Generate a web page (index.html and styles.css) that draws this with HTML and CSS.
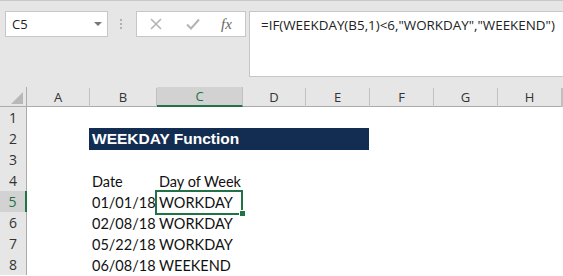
FILE: index.html
```html
<!DOCTYPE html>
<html lang="en">
<head>
    <meta charset="UTF-8">
    <title>WEEKDAY Function</title>
    <link rel="stylesheet" href="styles.css">
</head>
<body>
    <div class="toolbar">
        <div class="name-box">
            <span>C5</span>
            <span class="drop"></span>
        </div>
        <div class="grip">
            <i></i><i></i><i></i>
        </div>
        <div class="buttons">
            <svg class="btn" width="14" height="14" viewBox="0 0 14 14"><path d="M2 2 L12 12 M12 2 L2 12" stroke="#b4b4b4" stroke-width="1.6" fill="none"/></svg>
            <svg class="btn" width="16" height="14" viewBox="0 0 16 14"><path d="M2 7.5 L6 11.5 L14 2.5" stroke="#b4b4b4" stroke-width="2" fill="none"/></svg>
            <span class="fx">fx</span>
        </div>
        <div class="formula">=IF(WEEKDAY(B5,1)&lt;6,"WORKDAY","WEEKEND")</div>
    </div>

    <div class="sheet">
        <div class="row head">
            <div class="corner"><span></span></div>
            <div class="col">A</div>
            <div class="col">B</div>
            <div class="col active">C</div>
            <div class="col">D</div>
            <div class="col">E</div>
            <div class="col">F</div>
            <div class="col">G</div>
            <div class="col">H</div>
            <div class="col"></div>
        </div>
        <div class="row">
            <div class="num">1</div>
        </div>
        <div class="row">
            <div class="num">2</div>
            <div class="cell"></div>
            <div class="title">WEEKDAY Function</div>
        </div>
        <div class="row">
            <div class="num">3</div>
        </div>
        <div class="row">
            <div class="num">4</div>
            <div class="cell"></div>
            <div class="cell">Date</div>
            <div class="cell">Day of Week</div>
        </div>
        <div class="row">
            <div class="num active">5</div>
            <div class="cell"></div>
            <div class="cell right">01/01/18</div>
            <div class="cell selected">WORKDAY</div>
        </div>
        <div class="row">
            <div class="num">6</div>
            <div class="cell"></div>
            <div class="cell right">02/08/18</div>
            <div class="cell">WORKDAY</div>
        </div>
        <div class="row">
            <div class="num">7</div>
            <div class="cell"></div>
            <div class="cell right">05/22/18</div>
            <div class="cell">WORKDAY</div>
        </div>
        <div class="row">
            <div class="num">8</div>
            <div class="cell"></div>
            <div class="cell right">06/08/18</div>
            <div class="cell">WEEKEND</div>
        </div>
    </div>
</body>
</html>
```

FILE: styles.css
```css
body {
    margin: 0;
    background: #fff;
    overflow: hidden;
    font-family: 'Open Sans', sans-serif;
}

.toolbar {
    height: 87px;
    box-sizing: border-box;
    background: #e6e6e6;
    border-top: 1px solid #c8c8c8;
    padding-top: 10px;
    display: flex;
    align-items: flex-start;
}

.name-box {
    width: 103px;
    height: 26px;
    margin-left: 5px;
    box-sizing: border-box;
    background: #fff;
    border: 1px solid #c6c6c6;
    display: flex;
    align-items: center;
    justify-content: space-between;
    padding: 0 5px 0 6px;
    font-size: 13px;
    color: #222;
}

.drop {
    width: 0;
    height: 0;
    border-left: 4px solid transparent;
    border-right: 4px solid transparent;
    border-top: 4px solid #777;
}

.grip {
    width: 3px;
    margin: 8px 13px 0 12px;
    display: flex;
    flex-direction: column;
    gap: 2px;
}

.grip i {
    width: 2px;
    height: 2px;
    background: #b0b0b0;
}

.buttons {
    width: 110px;
    height: 26px;
    box-sizing: border-box;
    background: #fff;
    border: 1px solid #c6c6c6;
    display: flex;
    align-items: center;
    padding-left: 12px;
}

.buttons .btn {
    margin-right: 22px;
}

.fx {
    font-family: 'Liberation Serif', serif;
    font-style: italic;
    font-size: 15px;
    color: #666;
    margin-left: -2px;
}

.formula {
    flex: 1;
    height: 66px;
    margin-left: 3px;
    margin-right: -4px;
    box-sizing: border-box;
    background: #fff;
    border: 1px solid #c6c6c6;
    padding: 4px 0 0 11px;
    font-size: 13.4px;
    color: #222;
    white-space: nowrap;
}

.row {
    display: grid;
    grid-template-columns: 27px 63px 67px 86px 63px 64px 64px 64px 64px 1fr;
    height: 21px;
}

.row.head {
    height: 20px;
    background: #e6e6e6;
    border-bottom: 1px solid #ababab;
    box-sizing: border-box;
}

.corner {
    border-right: 1px solid #ababab;
    position: relative;
}

.corner span {
    position: absolute;
    right: 3px;
    bottom: 3px;
    width: 0;
    height: 0;
    border-left: 12px solid transparent;
    border-bottom: 12px solid #b8b8b8;
}

.col {
    border-right: 1px solid #c0c0c0;
    text-align: center;
    font-size: 13px;
    line-height: 19px;
    color: #333;
    margin-top: 1px;
}

.col.active {
    background: #d2d2d2;
    border-bottom: 2px solid #217346;
    margin-top: 0;
    line-height: 18px;
    color: #217346;
}

.num {
    background: #e6e6e6;
    border-right: 1px solid #ababab;
    border-bottom: 1px solid #c0c0c0;
    text-align: center;
    font-size: 14px;
    line-height: 21px;
    color: #333;
}

.num.active {
    background: #d2d2d2;
    border-right: 2px solid #217346;
    color: #217346;
}

.cell {
    font-family: Lato, 'Liberation Sans', sans-serif;
    font-size: 14.5px;
    line-height: 21px;
    padding: 1px 2px 0;
    color: #111;
    white-space: nowrap;
}

.cell.right {
    text-align: right;
    padding-right: 3px;
}

.title {
    grid-column: 3 / span 4;
    margin-left: -1px;
    margin-right: 1px;
    background: #132d52;
    color: #fff;
    font-family: 'Liberation Sans', sans-serif;
    font-weight: bold;
    font-size: 15.5px;
    line-height: 22px;
    padding-left: 3px;
}

.selected {
    position: relative;
}

.selected::after {
    content: "";
    position: absolute;
    left: -2px;
    top: -1px;
    right: 0;
    bottom: -2px;
    border: 2px solid #217346;
}

.selected::before {
    content: "";
    position: absolute;
    right: -3px;
    bottom: -4px;
    width: 5px;
    height: 5px;
    background: #217346;
    border: 1px solid #fff;
    z-index: 1;
}
```
